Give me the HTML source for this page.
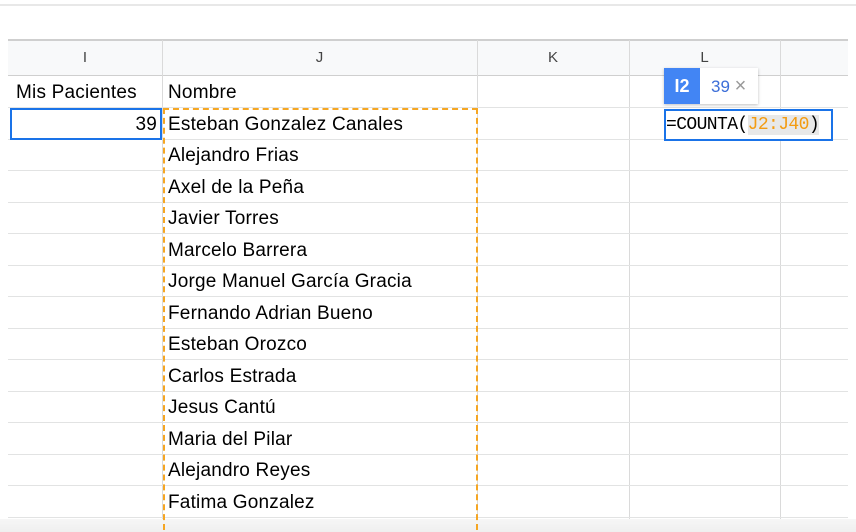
<!DOCTYPE html>
<html><head><style>
body{margin:0;width:856px;height:532px;background:#fff;position:relative;overflow:hidden;font-family:"Liberation Sans",Arial,sans-serif;}
.a{position:absolute}
.h{background:#f8f9fa;}
.vl{position:absolute;width:1px;background:#e2e3e3}
.hl{position:absolute;height:1px;background:#e2e3e3;left:8px;width:840px}
.t{position:absolute;font-size:19px;color:#000;line-height:31px;white-space:nowrap;letter-spacing:0.2px}
.ch{position:absolute;top:40px;height:36px;line-height:36px;text-align:center;font-size:15px;color:#444}
</style></head><body>
<div class="a" style="left:0;top:4px;width:856px;height:2px;background:#e8e8e8"></div>
<div class="a h" style="left:8px;top:40px;width:840px;height:36px"></div>
<div class="a" style="left:8px;top:39px;width:840px;height:2px;background:#cfcfcf"></div>
<div class="a" style="left:8px;top:75px;width:840px;height:1px;background:#cfcfcf"></div>
<div class="vl" style="left:162px;top:40px;height:480px;background:#dadada"></div>
<div class="vl" style="left:477px;top:40px;height:480px;background:#dadada"></div>
<div class="vl" style="left:629px;top:40px;height:480px;background:#dadada"></div>
<div class="vl" style="left:780px;top:40px;height:480px;background:#dadada"></div>
<div class="ch" style="left:8px;width:154px">I</div>
<div class="ch" style="left:162px;width:315px">J</div>
<div class="ch" style="left:477px;width:152px">K</div>
<div class="ch" style="left:629px;width:151px">L</div>
<div id="g"></div>
<script>
var r=[107,139,170,202,233,265,296,328,359,391,422,454,485,517];
var s='';r.forEach(function(y){s+='<div class="hl" style="top:'+y+'px"></div>';});
var n=["Nombre","Esteban Gonzalez Canales","Alejandro Frias","Axel de la Peña","Javier Torres","Marcelo Barrera","Jorge Manuel García Gracia","Fernando Adrian Bueno","Esteban Orozco","Carlos Estrada","Jesus Cantú","Maria del Pilar","Alejandro Reyes","Fatima Gonzalez"];
n.forEach(function(t,i){s+='<div class="t" style="left:168px;top:'+(77+i*31.5)+'px">'+t+'</div>';});
document.getElementById('g').innerHTML=s;
</script>
<div class="t" style="left:16px;top:77px">Mis Pacientes</div>
<div class="a" style="left:0;top:519px;width:856px;height:13px;background:linear-gradient(#f6f6f6,#efefef)"></div>
<div class="a" style="left:10px;top:108px;width:148px;height:28px;border:2px solid #1a73e8"></div>
<div class="t" style="left:12px;top:109px;width:145px;text-align:right">39</div>
<div class="a" style="left:163px;top:108px;width:311px;height:420px;border:2px dashed #f5a623;border-bottom:none"></div>
<div class="a" style="left:664px;top:68px;width:94px;height:36px;background:#fff;box-shadow:0 1px 3px rgba(0,0,0,.25)"></div>
<div class="a" style="left:664px;top:68px;width:36px;height:36px;background:#4285f4;color:#fff;font-size:18px;font-weight:bold;line-height:36px;text-align:center">I2</div>
<div class="a" style="left:711px;top:68px;line-height:36px;font-size:17px;color:#3c6ed8">39 <span style="color:#999;font-size:20px">×</span></div>
<div class="a" style="left:664px;top:109px;width:165px;height:28px;border:2px solid #1a73e8;background:#fff;font-family:'Liberation Mono',monospace;font-size:18px;line-height:28px;white-space:nowrap;letter-spacing:-0.6px;color:#000">=COUNTA(<span style="background:#e8e8e8;color:#f39c12">J2:J40</span><span style="background:#e8e8e8">)</span></div>
</body></html>
